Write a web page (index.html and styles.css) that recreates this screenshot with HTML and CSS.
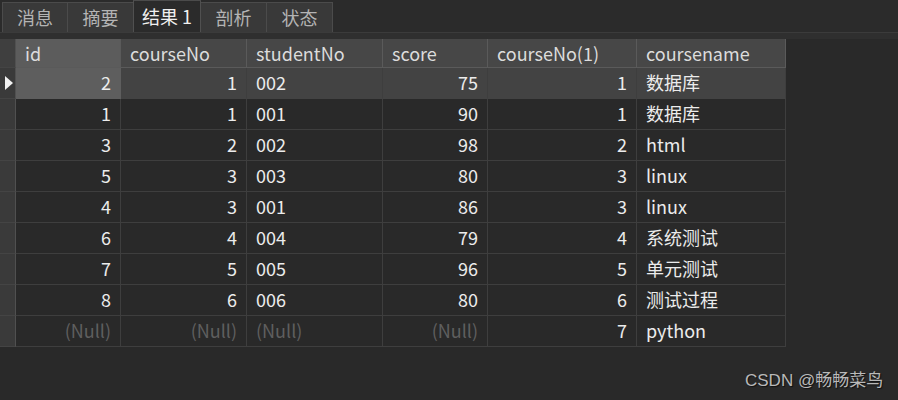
FILE: index.html
```html
<!DOCTYPE html>
<html>
<head>
<meta charset="utf-8">
<link rel="stylesheet" href="styles.css">
</head>
<body>
<div class="tabs">
  <div class="tab">消息</div>
  <div class="tab">摘要</div>
  <div class="tab active">结果 1</div>
  <div class="tab">剖析</div>
  <div class="tab">状态</div>
</div>
<div class="strip"></div>
<div class="grid">
  <div class="rh hd"></div>
  <div class="hd sel">id</div>
  <div class="hd">courseNo</div>
  <div class="hd">studentNo</div>
  <div class="hd">score</div>
  <div class="hd">courseNo(1)</div>
  <div class="hd">coursename</div>

  <div class="rh cur"><svg width="10" height="16" viewBox="0 0 10 16"><path d="M1 1 L9 8 L1 15 Z" fill="#f2f2f2"/></svg></div>
  <div class="c r cursel">2</div>
  <div class="c r currow">1</div>
  <div class="c currow">002</div>
  <div class="c r currow">75</div>
  <div class="c r currow">1</div>
  <div class="c currow">数据库</div>

  <div class="rh"></div><div class="c r">1</div><div class="c r">1</div><div class="c">001</div><div class="c r">90</div><div class="c r">1</div><div class="c">数据库</div>
  <div class="rh"></div><div class="c r">3</div><div class="c r">2</div><div class="c">002</div><div class="c r">98</div><div class="c r">2</div><div class="c">html</div>
  <div class="rh"></div><div class="c r">5</div><div class="c r">3</div><div class="c">003</div><div class="c r">80</div><div class="c r">3</div><div class="c">linux</div>
  <div class="rh"></div><div class="c r">4</div><div class="c r">3</div><div class="c">001</div><div class="c r">86</div><div class="c r">3</div><div class="c">linux</div>
  <div class="rh"></div><div class="c r">6</div><div class="c r">4</div><div class="c">004</div><div class="c r">79</div><div class="c r">4</div><div class="c">系统测试</div>
  <div class="rh"></div><div class="c r">7</div><div class="c r">5</div><div class="c">005</div><div class="c r">96</div><div class="c r">5</div><div class="c">单元测试</div>
  <div class="rh"></div><div class="c r">8</div><div class="c r">6</div><div class="c">006</div><div class="c r">80</div><div class="c r">6</div><div class="c">测试过程</div>
  <div class="rh"></div><div class="c r null">(Null)</div><div class="c r null">(Null)</div><div class="c null">(Null)</div><div class="c r null">(Null)</div><div class="c r">7</div><div class="c">python</div>
</div>
<div class="mark">CSDN @畅畅菜鸟</div>
</body>
</html>
```
FILE: styles.css
```css
html, body {
  margin: 0;
  padding: 0;
  background: #292929;
  width: 898px;
  height: 400px;
  overflow: hidden;
  font-family: "Noto Sans CJK SC", "Noto Sans", sans-serif;
  color: #e6e6e6;
}
.tabs {
  display: flex;
  height: 32px;
  padding-left: 2px;
  align-items: flex-end;
  background: #2b2b2b;
}
.tab {
  box-sizing: border-box;
  width: 66px;
  height: 30px;
  border: 1px solid #4b4b4b;
  border-bottom: none;
  border-left: none;
  background: #393939;
  color: #b4b4b4;
  font-size: 18px;
  line-height: 28px;
  text-align: center;
}
.tab:first-child { border-left: 1px solid #4b4b4b; }
.tab.active {
  height: 32px;
  width: 68px;
  margin-left: -1px;
  border-left: 1px solid #505050;
  border-right: 1px solid #505050;
  background: #2b2b2b;
  color: #f0f0f0;
  line-height: 30px;
}
.strip {
  height: 7px;
  background: #2f2f2f;
  border-top: 1px solid #3b3b3b;
  box-sizing: border-box;
}
.grid {
  display: grid;
  grid-template-columns: 16px 105px 126px 136px 105px 149px 149px;
  grid-auto-rows: 31px;
  grid-template-rows: 29px;
  width: 786px;
  font-size: 18px;
}
.grid > div {
  box-sizing: border-box;
  border-right: 1px solid #3e3e3e;
  border-bottom: 1px solid #3e3e3e;
  padding: 0 9px;
  line-height: 29px;
  white-space: nowrap;
  overflow: hidden;
}
.grid > .hd {
  background: #474747;
  color: #dcdcdc;
  border-right-color: #5a5a5a;
  border-bottom-color: #5a5a5a;
  line-height: 28px;
}
.grid > .hd.sel { background: #5c5c5c; padding-left: 9px; }
.grid > .rh {
  padding: 0;
  background: #3a3a3a;
  border-right-color: #505050;
  border-bottom-color: #444;
}
.grid > .rh.hd { background: #3f3f3f; }
.grid > .rh.cur { display: flex; align-items: center; padding-left: 4px; }
.c { background: #292929; color: #ececec; }
.c.r { text-align: right; }
.grid > .currow { background: #434343; border-bottom-color: #434343; }
.grid > .cursel { background: #5e5e5e; border-bottom-color: #5e5e5e; border-right-color: #5e5e5e; }
.null { color: #5f5f5f; }
.mark {
  position: absolute;
  left: 745px;
  top: 366px;
  font-family: "Liberation Sans", "Noto Sans CJK SC", sans-serif;
  font-size: 17px;
  color: #b9b9b9;
  text-shadow: 1px 1px 1px #111;
}
```
